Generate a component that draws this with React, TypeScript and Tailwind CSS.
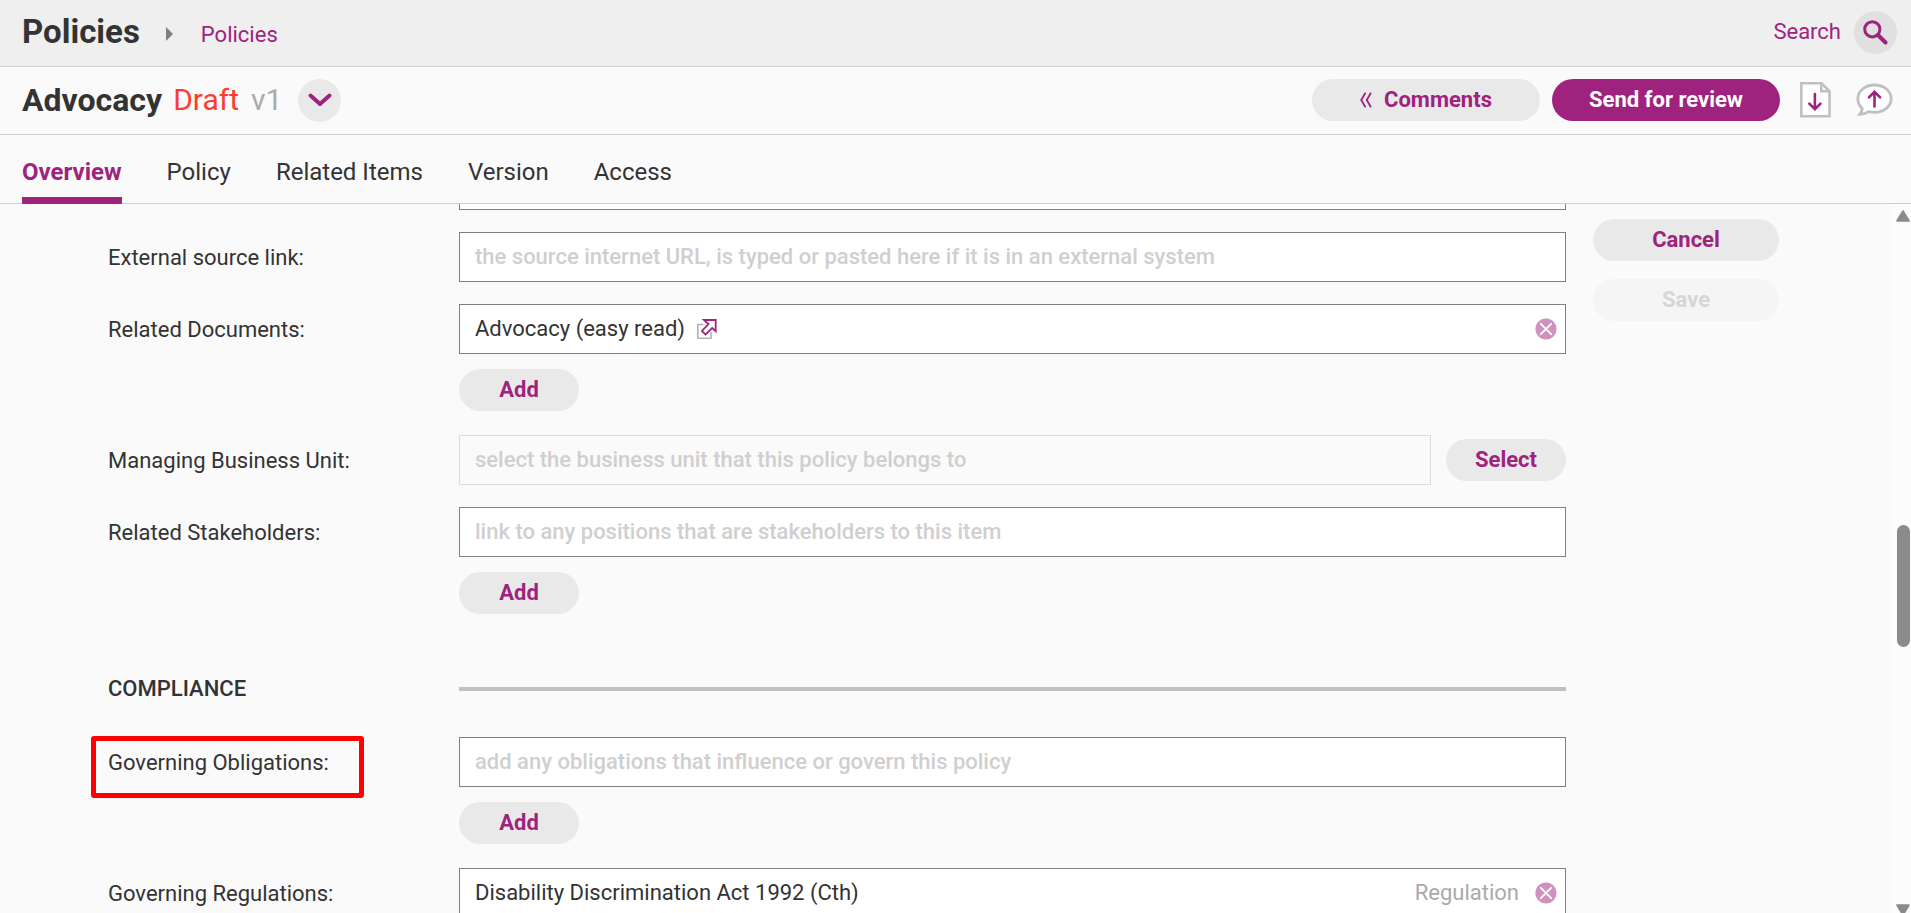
import type { InputHTMLAttributes, ReactNode } from 'react'

const tabs = ['Overview', 'Policy', 'Related Items', 'Version', 'Access']

function PillButton({
  children,
  className = 'w-[120px]',
  disabled = false,
}: {
  children: ReactNode
  className?: string
  disabled?: boolean
}) {
  return (
    <button
      type="button"
      disabled={disabled}
      className={`flex h-[42px] shrink-0 items-center justify-center rounded-full bg-[#e9e9e9] text-[22px] font-bold text-[#9f237e] disabled:bg-[#f5f5f5] disabled:text-[#d6d6d6] ${className}`}
    >
      {children}
    </button>
  )
}

function TextField(props: InputHTMLAttributes<HTMLInputElement>) {
  return (
    <input
      type="text"
      className="h-[50px] w-full min-w-0 flex-1 border border-[#808080] bg-white px-[15px] pb-[2px] text-[22px] text-[#333] outline-none placeholder:font-medium placeholder:text-[#cfcfcf] disabled:border-[#dcdcdc] disabled:bg-[#fafafa]"
      {...props}
    />
  )
}

function Row({ label, htmlFor, children }: { label?: string; htmlFor?: string; children: ReactNode }) {
  return (
    <div className="flex">
      <div className="w-[351px] shrink-0 pt-3">
        {htmlFor ? <label htmlFor={htmlFor}>{label}</label> : <span>{label}</span>}
      </div>
      <div className="min-w-0 flex-1">{children}</div>
    </div>
  )
}

function RemoveButton({ name }: { name: string }) {
  return (
    <button type="button" aria-label={`Remove ${name}`} className="shrink-0">
      <svg width="22" height="22" viewBox="0 0 22 22" fill="none">
        <circle cx="11" cy="11" r="10.6" fill="#cf91be" />
        <path d="M5.8 5.8 16.2 16.2M16.2 5.8 5.8 16.2" stroke="#fff" strokeWidth="1.8" strokeLinecap="round" />
      </svg>
    </button>
  )
}

function LinkedItem({ name, kind, external }: { name: string; kind?: string; external?: boolean }) {
  return (
    <div className="flex h-[50px] items-center border border-[#808080] bg-white pr-2 pl-[15px]">
      <a href="#item" className="flex flex-1 items-center gap-3">
        {name}
        {external && (
          <svg width="20" height="20" viewBox="0 0 20 20" fill="none">
            <path d="M6.5 5.5H.8V19.2H14V13" stroke="#b3b3b3" strokeWidth="1.6" />
            <path
              d="M7 1H18.7V12.2L15.2 9 8.6 15.6 4.9 11.9 11.5 5.1Z"
              fill="#fff"
              stroke="#9f237e"
              strokeWidth="1.8"
            />
          </svg>
        )}
      </a>
      {kind && <span className="mr-4 text-[#aaaaaa]">{kind}</span>}
      <RemoveButton name={name} />
    </div>
  )
}

function TopBar() {
  return (
    <header className="flex h-[67px] shrink-0 items-center border-b border-[#d0d0d0] bg-[#efefef] pr-[14px] pb-[2px] pl-[22px]">
      <h1 className="text-[33px] font-bold">Policies</h1>
      <svg className="mt-1 ml-[26px]" width="7" height="14" viewBox="0 0 7 14">
        <path d="M0 0 7 7 0 14Z" fill="#808080" />
      </svg>
      <a href="#policies" className="mt-[6px] ml-7 text-[#9f237e]">
        Policies
      </a>
      <button type="button" className="ml-auto flex items-center gap-[13px] text-[#9f237e]">
        Search
        <span className="flex size-[43px] items-center justify-center rounded-full bg-[#e0e0e0]">
          <svg width="25" height="25" viewBox="0 0 25 25" fill="none" stroke="#9f237e">
            <circle cx="9.3" cy="9.3" r="7.6" strokeWidth="3" />
            <path d="M15 15 22.5 22.5" strokeWidth="4" strokeLinecap="round" />
          </svg>
        </span>
      </button>
    </header>
  )
}

function TitleBar() {
  return (
    <div className="flex h-[68px] shrink-0 items-center border-b border-[#d0d0d0] pr-[18px] pb-px pl-[22px]">
      <h2 className="text-[32px] font-bold">Advocacy</h2>
      <span className="ml-[11px] text-[30px] text-[#ff3b30]">Draft</span>
      <span className="ml-3 text-[30px] text-[#aaaaaa]">v1</span>
      <button
        type="button"
        aria-label="More actions"
        className="ml-4 flex size-[43px] items-center justify-center rounded-full bg-[#e9e9e9]"
      >
        <svg width="24" height="14" viewBox="0 0 24 14" fill="none">
          <path d="M2.5 2.5 12 11 21.5 2.5" stroke="#9f237e" strokeWidth="4" strokeLinecap="round" strokeLinejoin="round" />
        </svg>
      </button>

      <div className="ml-auto flex items-center gap-3">
        <PillButton className="w-[228px] gap-3">
          <svg width="12" height="16" viewBox="0 0 12 16" fill="none">
            <path d="M5.5 .8 1.2 8 5.5 15.2M11 .8 6.7 8 11 15.2" stroke="#9f237e" strokeWidth="1.8" />
          </svg>
          Comments
        </PillButton>
        <button type="button" className="h-[42px] w-[228px] rounded-full bg-[#9f237e] text-[22px] font-bold text-white">
          Send for review
        </button>
      </div>
      <button type="button" aria-label="Download" className="ml-5">
        <svg width="31" height="36" viewBox="0 0 31 36" fill="none">
          <path d="M1.3 1.3H21.5L29.5 9.3V34.3H1.3Z" fill="#fff" stroke="#c0c0c0" strokeWidth="2.6" />
          <path d="M21.3 1.5V9.3H29.3" stroke="#c0c0c0" strokeWidth="2.6" />
          <path d="M14.9 12V27M9.3 21.6 14.9 27.2 20.5 21.6" stroke="#9f237e" strokeWidth="2.6" strokeLinecap="round" />
        </svg>
      </button>
      <button type="button" aria-label="Share feedback" className="ml-[25px]">
        <svg width="37" height="34" viewBox="0 0 37 34" fill="none">
          <path
            d="M18.5 2C9.2 2 1.8 8 1.8 15.8 1.8 19.8 3.4 23 6.2 25.4 6 27.8 5 29.7 3.8 31.3 7.5 31.2 10.5 30.3 12.8 28.7 14.6 29.2 16.5 29.4 18.5 29.4 27.9 29.4 35.2 23.4 35.2 15.8 35.2 8 27.9 2 18.5 2Z"
            fill="#fff"
            stroke="#c0c0c0"
            strokeWidth="2.8"
          />
          <path d="M18.5 23.5V9M12.9 14.4 18.5 8.8 24.1 14.4" stroke="#9f237e" strokeWidth="2.6" strokeLinecap="round" />
        </svg>
      </button>
    </div>
  )
}

function Tabs() {
  return (
    <nav className="flex h-[69px] shrink-0 gap-[45px] border-b border-[#d0d0d0] px-[22px] text-[24px]">
      {tabs.map((tab, i) => (
        <a
          key={tab}
          href="#tab"
          className={
            i === 0
              ? '-mb-px flex items-end border-b-[7px] border-[#9f237e] pb-[11px] font-bold text-[#9f237e]'
              : 'mb-[6px] flex items-end pb-[11px]'
          }
        >
          {tab}
        </a>
      ))}
    </nav>
  )
}

export default function App() {
  return (
    <div className="flex h-screen flex-col overflow-hidden bg-[#fafafa] font-[Roboto,sans-serif] text-[22px] leading-7 text-[#333]">
      <TopBar />
      <TitleBar />
      <Tabs />
      <main className="flex min-h-0 flex-1 overflow-hidden">
        {/* the form is scrolled part of the way down */}
        <form className="-mt-11 ml-[108px] flex min-w-0 flex-1 flex-col gap-[22px]">
          <Row>
            <TextField aria-label="Source" />
          </Row>
          <Row label="External source link:" htmlFor="external">
            <TextField
              id="external"
              placeholder="the source internet URL, is typed or pasted here if it is in an external system"
            />
          </Row>
          <Row label="Related Documents:">
            <LinkedItem name="Advocacy (easy read)" external />
            <div className="mt-[15px] mb-[2px]">
              <PillButton>Add</PillButton>
            </div>
          </Row>
          <Row label="Managing Business Unit:" htmlFor="unit">
            <div className="flex items-center gap-[15px]">
              <TextField id="unit" disabled placeholder="select the business unit that this policy belongs to" />
              <PillButton>Select</PillButton>
            </div>
          </Row>
          <Row label="Related Stakeholders:" htmlFor="stakeholders">
            <TextField id="stakeholders" placeholder="link to any positions that are stakeholders to this item" />
            <div className="mt-[15px] mb-[2px]">
              <PillButton>Add</PillButton>
            </div>
          </Row>

          <div className="mt-[37px] mb-3 flex items-center">
            <h3 className="w-[351px] shrink-0 font-medium">COMPLIANCE</h3>
            <hr className="flex-1 border-t-4 border-[#c0c0c0]" />
          </div>

          <div className="relative">
            <div className="absolute -top-px -left-[17px] h-[62px] w-[273px] rounded-[3px] border-[5px] border-[#ff0000]" />
            <Row label="Governing Obligations:" htmlFor="obligations">
              <TextField id="obligations" placeholder="add any obligations that influence or govern this policy" />
              <div className="mt-[15px] mb-[2px]">
                <PillButton>Add</PillButton>
              </div>
            </Row>
          </div>
          <Row label="Governing Regulations:">
            <LinkedItem name="Disability Discrimination Act 1992 (Cth)" kind="Regulation" />
          </Row>
        </form>

        <aside className="mr-[114px] ml-[27px] flex w-[186px] shrink-0 flex-col gap-[18px] pt-[15px]">
          <PillButton className="w-full">Cancel</PillButton>
          <PillButton className="w-full" disabled>
            Save
          </PillButton>
        </aside>

        <div className="flex w-[18px] shrink-0 flex-col items-center bg-[#fcfcfc] pt-[6px] pl-[2px]">
          <svg width="14" height="12" viewBox="0 0 14 12">
            <path d="M7 1.2 12.8 10.8H1.2Z" fill="#8b8b8b" stroke="#8b8b8b" strokeWidth="2" strokeLinejoin="round" />
          </svg>
          <div className="mt-[303px] h-[122px] w-[13px] shrink-0 rounded-full bg-[#8b8b8b]" />
          <svg className="mt-auto shrink-0" width="14" height="9" viewBox="0 0 14 9">
            <path d="M1.2 1.2H12.8L7 10.8Z" fill="#8b8b8b" stroke="#8b8b8b" strokeWidth="2" strokeLinejoin="round" />
          </svg>
        </div>
      </main>
    </div>
  )
}
